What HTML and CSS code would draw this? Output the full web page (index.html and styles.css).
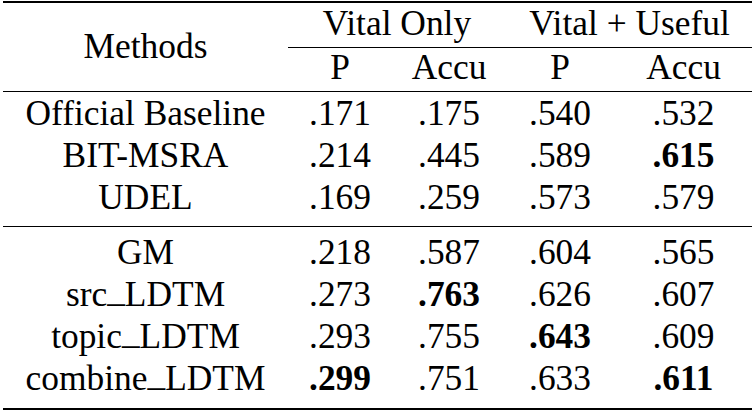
FILE: index.html
```html
<!DOCTYPE html>
<html>
<head>
<meta charset="utf-8">
<link rel="stylesheet" href="styles.css">
</head>
<body>
<table class="results">
  <colgroup>
    <col class="c-method">
    <col class="c-p1">
    <col class="c-a1">
    <col class="c-p2">
    <col class="c-a2">
  </colgroup>
  <thead>
    <tr class="h1">
      <th class="methods" rowspan="2">Methods</th>
      <th class="group" colspan="2">Vital Only</th>
      <th class="group" colspan="2">Vital + Useful</th>
    </tr>
    <tr class="h2">
      <th>P</th>
      <th>Accu</th>
      <th>P</th>
      <th>Accu</th>
    </tr>
  </thead>
  <tbody class="g1">
    <tr class="first">
      <td>Official Baseline</td><td>.171</td><td>.175</td><td>.540</td><td>.532</td>
    </tr>
    <tr>
      <td>BIT-MSRA</td><td>.214</td><td>.445</td><td>.589</td><td><b>.615</b></td>
    </tr>
    <tr class="last">
      <td>UDEL</td><td>.169</td><td>.259</td><td>.573</td><td>.579</td>
    </tr>
  </tbody>
  <tbody class="g2">
    <tr class="first">
      <td>GM</td><td>.218</td><td>.587</td><td>.604</td><td>.565</td>
    </tr>
    <tr>
      <td>src<span class="us">_</span>LDTM</td><td>.273</td><td><b>.763</b></td><td>.626</td><td>.607</td>
    </tr>
    <tr>
      <td>topic<span class="us">_</span>LDTM</td><td>.293</td><td>.755</td><td><b>.643</b></td><td>.609</td>
    </tr>
    <tr class="last">
      <td>combine<span class="us">_</span>LDTM</td><td><b>.299</b></td><td>.751</td><td>.633</td><td><b>.611</b></td>
    </tr>
  </tbody>
</table>
</body>
</html>
```

FILE: styles.css
```css
html, body {
  margin: 0;
  padding: 0;
  background: #ffffff;
}

body {
  padding: 1px 0 0 3px;
  width: 752px;
  box-sizing: border-box;
}

.results {
  border-collapse: collapse;
  border-spacing: 0;
  table-layout: fixed;
  width: 750px;
  font-family: "Liberation Serif", "Times New Roman", serif;
  font-size: 35.4px;
  color: #000000;
}

.c-method { width: 285px; }
.c-p1 { width: 104px; }
.c-a1 { width: 114px; }
.c-p2 { width: 108px; }
.c-a2 { width: 139px; }

.results th,
.results td {
  padding: 0;
  text-align: center;
  font-weight: normal;
  white-space: nowrap;
  vertical-align: top;
}

.results b {
  font-weight: bold;
}

/* header */
.h1 th {
  border-top: 2px solid #000000;
  line-height: 40px;
  padding-bottom: 4px;
}

.h1 th.group {
  border-bottom: 1px solid #000000;
}

.h1 th.methods {
  vertical-align: middle;
  padding-bottom: 2px;
  border-bottom: 1px solid #000000;
}

.h2 th {
  line-height: 38px;
  padding-bottom: 5px;
  border-bottom: 1px solid #000000;
}

/* body */
.results td {
  line-height: 42px;
}

.g1 .last td {
  padding-bottom: 8px;
  border-bottom: 1px solid #000000;
}

.g2 .first td {
  padding-top: 4px;
}

.g2 .last td {
  padding-bottom: 9px;
  border-bottom: 2px solid #000000;
}

.us {
  line-height: 0;
  vertical-align: 0.15em;
}
```
